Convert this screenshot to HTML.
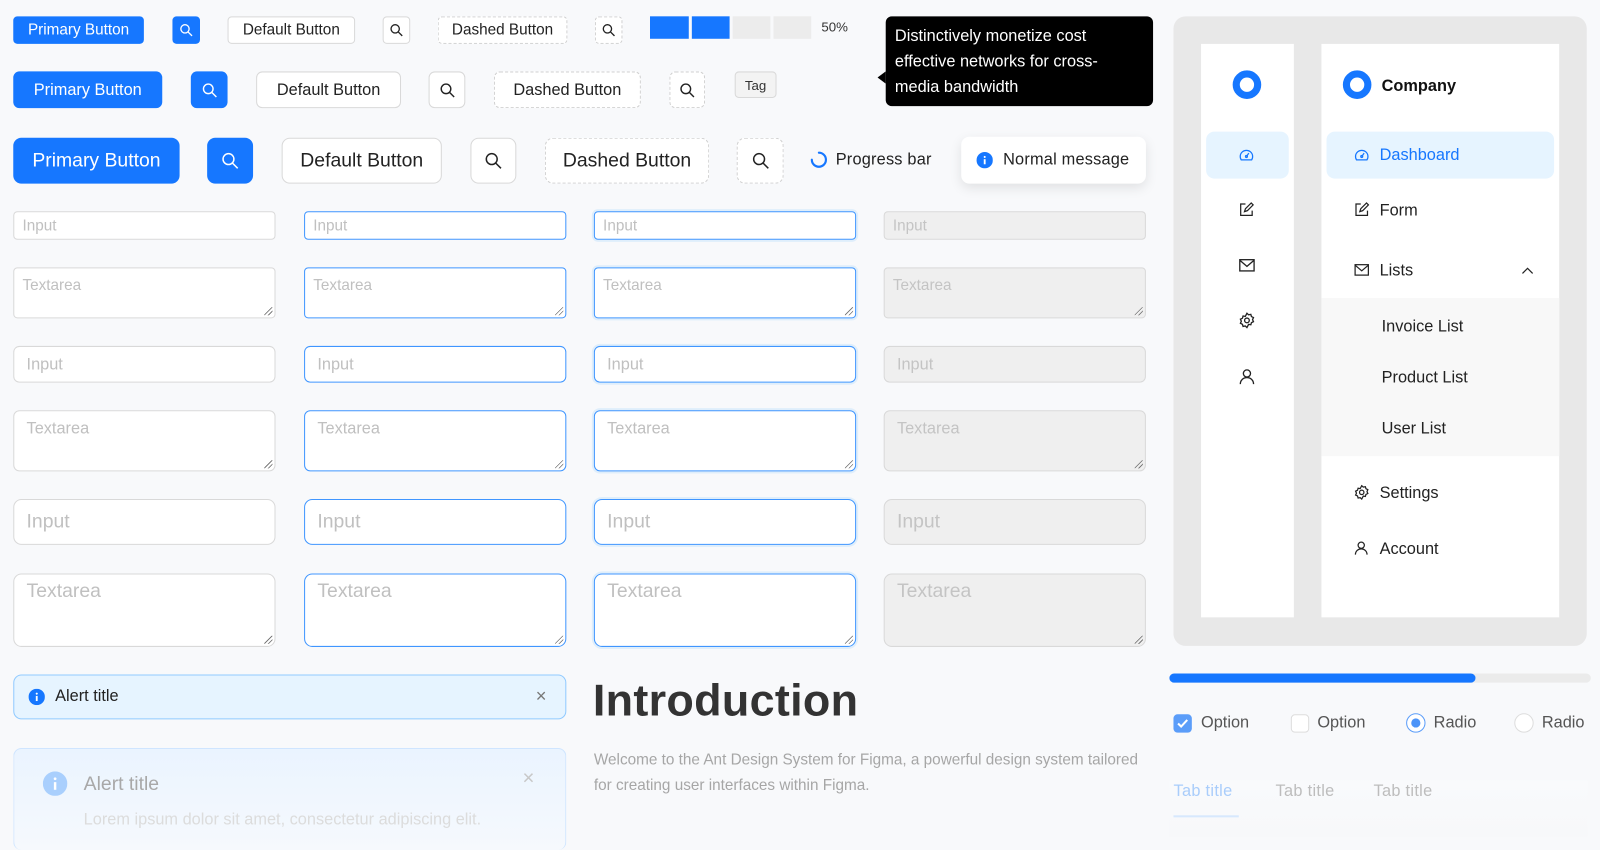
<!DOCTYPE html>
<html><head><meta charset="utf-8"><style>
html,body{margin:0;padding:0;width:1600px;height:840px;overflow:hidden;background:#f8f9fb;}
#w{position:absolute;left:0;top:0;width:1568px;height:823px;transform:scale(1.02041);transform-origin:0 0;font-family:"Liberation Sans",sans-serif;color:#222;}
.a{position:absolute;box-sizing:border-box;}
.b{display:flex;align-items:center;justify-content:center;white-space:nowrap;}
.p{background:#1677ff;color:#fff;}
.d{background:#fff;border:1px solid #d9d9d9;color:#222;}
.ds{background:#fff;border:1px dashed #d0d0d0;color:#222;}
.in{background:#fff;border:1px solid #d9d9d9;color:#c0c0c0;display:flex;align-items:center;padding-left:8px;}
.ta{background:#fff;border:1px solid #d9d9d9;color:#c0c0c0;padding:8px 0 0 8px;}
.f{border-color:#4096ff;}
.g{border-color:#4096ff;box-shadow:0 0 0 2px rgba(5,145,255,.1);}
.x{background:#efefef;border-color:#d9d9d9;color:#c4c4c4;}
.rz::after{content:"";position:absolute;right:2px;bottom:2px;width:8px;height:8px;background:linear-gradient(135deg,transparent 45%,#777 46%,#777 52%,transparent 53%,transparent 70%,#777 71%,#777 77%,transparent 78%);}
.mi{position:absolute;font-size:16px;color:#222;}
svg{display:block}
</style></head><body><div id="w">
<!-- row1 -->
<div class="a b p" style="left:13px;top:16px;width:128px;height:27px;border-radius:4px;font-size:15px">Primary Button</div>
<div class="a b p" style="left:169px;top:16px;width:27px;height:27px;border-radius:4px"><svg width="13" height="13" viewBox="0 0 16 16"><circle cx="6.5" cy="6.5" r="5" fill="none" stroke="#fff" stroke-width="1.6"/><path d="M10.2 10.2L15 15" stroke="#fff" stroke-width="1.6"/></svg></div>
<div class="a b d" style="left:223px;top:16px;width:125px;height:27px;border-radius:4px;font-size:15px">Default Button</div>
<div class="a b d" style="left:375px;top:16px;width:27px;height:27px;border-radius:4px"><svg width="13" height="13" viewBox="0 0 16 16"><circle cx="6.5" cy="6.5" r="5" fill="none" stroke="#222" stroke-width="1.6"/><path d="M10.2 10.2L15 15" stroke="#222" stroke-width="1.6"/></svg></div>
<div class="a b ds" style="left:429px;top:16px;width:127px;height:27px;border-radius:4px;font-size:15px">Dashed Button</div>
<div class="a b ds" style="left:583px;top:16px;width:27px;height:27px;border-radius:4px"><svg width="13" height="13" viewBox="0 0 16 16"><circle cx="6.5" cy="6.5" r="5" fill="none" stroke="#222" stroke-width="1.6"/><path d="M10.2 10.2L15 15" stroke="#222" stroke-width="1.6"/></svg></div>
<div class="a" style="left:637px;top:16px;width:38px;height:22px;background:#1677ff"></div>
<div class="a" style="left:678px;top:16px;width:37px;height:22px;background:#1677ff"></div>
<div class="a" style="left:718px;top:16px;width:37px;height:22px;background:#ececec"></div>
<div class="a" style="left:758px;top:16px;width:37px;height:22px;background:#ececec"></div>
<div class="a" style="left:805px;top:19px;font-size:13px;color:#333">50%</div>
<div class="a" style="left:868px;top:16px;width:262px;height:88px;background:#000;border-radius:6px;color:#fff;font-size:16px;line-height:25px;padding:7px 22px 7px 9px">Distinctively monetize cost effective networks for cross-media bandwidth</div>
<div class="a" style="left:860px;top:70px;width:0;height:0;border-top:6px solid transparent;border-bottom:6px solid transparent;border-right:8px solid #000"></div>
<!-- row2 -->
<div class="a b p" style="left:13px;top:70px;width:146px;height:36px;border-radius:6px;font-size:16px;padding-top:2px">Primary Button</div>
<div class="a b p" style="left:187px;top:70px;width:36px;height:36px;border-radius:6px"><svg width="15" height="15" viewBox="0 0 16 16"><circle cx="6.5" cy="6.5" r="5" fill="none" stroke="#fff" stroke-width="1.5"/><path d="M10.2 10.2L15 15" stroke="#fff" stroke-width="1.5"/></svg></div>
<div class="a b d" style="left:251px;top:70px;width:142px;height:36px;border-radius:6px;font-size:16px;padding-top:2px">Default Button</div>
<div class="a b d" style="left:420px;top:70px;width:36px;height:36px;border-radius:6px"><svg width="15" height="15" viewBox="0 0 16 16"><circle cx="6.5" cy="6.5" r="5" fill="none" stroke="#222" stroke-width="1.5"/><path d="M10.2 10.2L15 15" stroke="#222" stroke-width="1.5"/></svg></div>
<div class="a b ds" style="left:484px;top:70px;width:144px;height:36px;border-radius:6px;font-size:16px;padding-top:2px">Dashed Button</div>
<div class="a b ds" style="left:656px;top:70px;width:35px;height:36px;border-radius:6px"><svg width="15" height="15" viewBox="0 0 16 16"><circle cx="6.5" cy="6.5" r="5" fill="none" stroke="#222" stroke-width="1.5"/><path d="M10.2 10.2L15 15" stroke="#222" stroke-width="1.5"/></svg></div>
<div class="a b" style="left:720px;top:70px;width:41px;height:26px;border-radius:4px;background:#f3f3f3;border:1px solid #d9d9d9;font-size:13px;color:#333">Tag</div>
<!-- row3 -->
<div class="a b p" style="left:13px;top:135px;width:163px;height:45px;border-radius:8px;font-size:19px">Primary Button</div>
<div class="a b p" style="left:203px;top:135px;width:45px;height:45px;border-radius:8px"><svg width="17" height="17" viewBox="0 0 16 16"><circle cx="6.5" cy="6.5" r="5" fill="none" stroke="#fff" stroke-width="1.4"/><path d="M10.2 10.2L15 15" stroke="#fff" stroke-width="1.4"/></svg></div>
<div class="a b d" style="left:276px;top:135px;width:157px;height:45px;border-radius:8px;font-size:19px">Default Button</div>
<div class="a b d" style="left:461px;top:135px;width:45px;height:45px;border-radius:8px"><svg width="17" height="17" viewBox="0 0 16 16"><circle cx="6.5" cy="6.5" r="5" fill="none" stroke="#222" stroke-width="1.4"/><path d="M10.2 10.2L15 15" stroke="#222" stroke-width="1.4"/></svg></div>
<div class="a b ds" style="left:534px;top:135px;width:161px;height:45px;border-radius:8px;font-size:19px">Dashed Button</div>
<div class="a b ds" style="left:722px;top:135px;width:46px;height:45px;border-radius:8px"><svg width="17" height="17" viewBox="0 0 16 16"><circle cx="6.5" cy="6.5" r="5" fill="none" stroke="#222" stroke-width="1.4"/><path d="M10.2 10.2L15 15" stroke="#222" stroke-width="1.4"/></svg></div>
<svg class="a" style="left:794px;top:148px" width="17" height="17" viewBox="0 0 16 16"><path d="M8 1.5A6.5 6.5 0 1 1 1.5 8" fill="none" stroke="#1677ff" stroke-width="2" stroke-linecap="round"/></svg>
<div class="a" style="left:819px;top:148px;font-size:16px;color:#222;letter-spacing:0.2px">Progress bar</div>
<div class="a" style="left:942px;top:134px;width:181px;height:46px;background:#fff;border-radius:8px;box-shadow:0 4px 12px rgba(0,0,0,.1)"></div>
<svg class="a" style="left:957px;top:149px" width="16" height="16" viewBox="0 0 16 16"><circle cx="8" cy="8" r="8" fill="#1677ff"/><rect x="7.1" y="7" width="1.8" height="5" fill="#fff"/><circle cx="8" cy="4.8" r="1" fill="#fff"/></svg>
<div class="a" style="left:983px;top:148px;font-size:16px;color:#222;letter-spacing:0.2px">Normal message</div>
<!-- inputs -->
<div class="a in" style="left:13px;top:207px;width:257px;height:28px;border-radius:4px;font-size:15px">Input</div>
<div class="a in f" style="left:298px;top:207px;width:257px;height:28px;border-radius:4px;font-size:15px">Input</div>
<div class="a in g" style="left:582px;top:207px;width:257px;height:28px;border-radius:4px;font-size:15px">Input</div>
<div class="a in x" style="left:866px;top:207px;width:257px;height:28px;border-radius:4px;font-size:15px">Input</div>
<div class="a ta rz" style="left:13px;top:262px;width:257px;height:50px;border-radius:4px;font-size:15px;padding-top:8px">Textarea</div>
<div class="a ta rz f" style="left:298px;top:262px;width:257px;height:50px;border-radius:4px;font-size:15px;padding-top:8px">Textarea</div>
<div class="a ta rz g" style="left:582px;top:262px;width:257px;height:50px;border-radius:4px;font-size:15px;padding-top:8px">Textarea</div>
<div class="a ta rz x" style="left:866px;top:262px;width:257px;height:50px;border-radius:4px;font-size:15px;padding-top:8px">Textarea</div>
<div class="a in" style="left:13px;top:339px;width:257px;height:36px;border-radius:6px;font-size:16px;padding-left:12px;padding-top:2px">Input</div>
<div class="a in f" style="left:298px;top:339px;width:257px;height:36px;border-radius:6px;font-size:16px;padding-left:12px;padding-top:2px">Input</div>
<div class="a in g" style="left:582px;top:339px;width:257px;height:36px;border-radius:6px;font-size:16px;padding-left:12px;padding-top:2px">Input</div>
<div class="a in x" style="left:866px;top:339px;width:257px;height:36px;border-radius:6px;font-size:16px;padding-left:12px;padding-top:2px">Input</div>
<div class="a ta rz" style="left:13px;top:402px;width:257px;height:60px;border-radius:6px;font-size:16px;padding:9px 12px">Textarea</div>
<div class="a ta rz f" style="left:298px;top:402px;width:257px;height:60px;border-radius:6px;font-size:16px;padding:9px 12px">Textarea</div>
<div class="a ta rz g" style="left:582px;top:402px;width:257px;height:60px;border-radius:6px;font-size:16px;padding:9px 12px">Textarea</div>
<div class="a ta rz x" style="left:866px;top:402px;width:257px;height:60px;border-radius:6px;font-size:16px;padding:9px 12px">Textarea</div>
<div class="a in" style="left:13px;top:489px;width:257px;height:45px;border-radius:8px;font-size:19px;padding-left:12px">Input</div>
<div class="a in f" style="left:298px;top:489px;width:257px;height:45px;border-radius:8px;font-size:19px;padding-left:12px">Input</div>
<div class="a in g" style="left:582px;top:489px;width:257px;height:45px;border-radius:8px;font-size:19px;padding-left:12px">Input</div>
<div class="a in x" style="left:866px;top:489px;width:257px;height:45px;border-radius:8px;font-size:19px;padding-left:12px">Input</div>
<div class="a ta rz" style="left:13px;top:562px;width:257px;height:72px;border-radius:8px;font-size:19px;padding:6px 12px">Textarea</div>
<div class="a ta rz f" style="left:298px;top:562px;width:257px;height:72px;border-radius:8px;font-size:19px;padding:6px 12px">Textarea</div>
<div class="a ta rz g" style="left:582px;top:562px;width:257px;height:72px;border-radius:8px;font-size:19px;padding:6px 12px">Textarea</div>
<div class="a ta rz x" style="left:866px;top:562px;width:257px;height:72px;border-radius:8px;font-size:19px;padding:6px 12px">Textarea</div>
<!-- alerts -->
<div class="a" style="left:13px;top:661px;width:542px;height:44px;border-radius:8px;background:#e6f4ff;border:1px solid #91caff"></div>
<svg class="a" style="left:28px;top:675px" width="16" height="16" viewBox="0 0 16 16"><circle cx="8" cy="8" r="8" fill="#1677ff"/><rect x="7.1" y="7" width="1.8" height="5" fill="#fff"/><circle cx="8" cy="4.8" r="1" fill="#fff"/></svg>
<div class="a" style="left:54px;top:674px;font-size:16px;color:#222">Alert title</div>
<div class="a" style="left:525px;top:672px;font-size:18px;color:#777">×</div>
<div class="a" style="left:13px;top:733px;width:542px;height:100px;border-radius:8px;background:linear-gradient(#eaf4ff,#f6f9fd);border:1px solid #cfe5ff;border-bottom:none"></div>
<svg class="a" style="left:42px;top:756px" width="24" height="24" viewBox="0 0 16 16"><circle cx="8" cy="8" r="8" fill="#a9cffd"/><rect x="7.2" y="7" width="1.6" height="5" fill="#fff"/><circle cx="8" cy="4.8" r=".9" fill="#fff"/></svg>
<div class="a" style="left:82px;top:758px;font-size:19px;color:#a8a8a8">Alert title</div>
<div class="a" style="left:512px;top:752px;font-size:20px;color:#c8c8c8">×</div>
<div class="a" style="left:82px;top:795px;font-size:16px;color:#dcdcdc">Lorem ipsum dolor sit amet, consectetur adipiscing elit.</div>
<!-- intro -->
<div class="a" style="left:581px;top:662px;font-size:44px;font-weight:bold;color:#333;letter-spacing:0.3px">Introduction</div>
<div class="a" style="left:582px;top:732px;width:540px;font-size:15px;line-height:25px;color:#a6a6a6">Welcome to the Ant Design System for Figma, a powerful design system tailored for creating user interfaces within Figma.</div>
<!-- menu panel -->
<div class="a" style="left:1150px;top:16px;width:405px;height:617px;background:#e8e8e8;border-radius:12px"></div>
<div class="a" style="left:1177px;top:43px;width:91px;height:562px;background:#fff"></div>
<div class="a" style="left:1295px;top:43px;width:233px;height:562px;background:#fff"></div>
<div class="a" style="left:1208px;top:69px;width:28px;height:28px;border-radius:50%;border:7px solid #1677ff"></div>
<div class="a" style="left:1316px;top:69px;width:28px;height:28px;border-radius:50%;border:7px solid #1677ff"></div>
<div class="a" style="left:1354px;top:76px;font-size:16px;font-weight:bold;color:#111">Company</div>
<div class="a" style="left:1182px;top:129px;width:81px;height:46px;background:#e6f4ff;border-radius:8px"></div>
<div class="a" style="left:1300px;top:129px;width:223px;height:46px;background:#e6f4ff;border-radius:8px"></div>
<div class="a" style="left:1295px;top:292px;width:233px;height:155px;background:#f8f8f8"></div>
<!-- icons left -->
<svg class="a" style="left:1214px;top:144px" width="15" height="15" viewBox="0 0 16 16" fill="none" stroke="#1677ff" stroke-width="1.3"><path d="M2.5 13.5A6.5 6.5 0 1 1 13.5 13.5Z"/><path d="M8 10L10.5 6.5"/><circle cx="8" cy="10" r="1"/></svg>
<svg class="a" style="left:1214px;top:198px" width="15" height="15" viewBox="0 0 16 16" fill="none" stroke="#222" stroke-width="1.3"><path d="M7 2H2v12h12V9"/><path d="M6 10l1-3 6-6 2 2-6 6z"/></svg>
<svg class="a" style="left:1214px;top:253px" width="16" height="14" viewBox="0 0 16 14" fill="none" stroke="#222" stroke-width="1.3"><rect x="1" y="1.5" width="14" height="11"/><path d="M1 2l7 6 7-6"/></svg>
<svg class="a" style="left:1214px;top:306px" width="16" height="16" viewBox="0 0 16 16" fill="none" stroke="#222" stroke-width="1.3"><path d="M8 1l1.6 1.5 2.2-.4.6 2.1 2 1-.9 2 .9 2-2 1-.6 2.1-2.2-.4L8 15l-1.6-1.5-2.2.4-.6-2.1-2-1 .9-2-.9-2 2-1 .6-2.1 2.2.4z"/><circle cx="8" cy="8" r="2.3"/></svg>
<svg class="a" style="left:1214px;top:361px" width="16" height="16" viewBox="0 0 16 16" fill="none" stroke="#222" stroke-width="1.3"><circle cx="8" cy="5" r="3.5"/><path d="M1.5 15.5c0-4 3-6.5 6.5-6.5s6.5 2.5 6.5 6.5"/></svg>
<!-- right items -->
<svg class="a" style="left:1327px;top:144px" width="15" height="15" viewBox="0 0 16 16" fill="none" stroke="#1677ff" stroke-width="1.3"><path d="M2.5 13.5A6.5 6.5 0 1 1 13.5 13.5Z"/><path d="M8 10L10.5 6.5"/><circle cx="8" cy="10" r="1"/></svg>
<div class="mi" style="left:1352px;top:144px;color:#1677ff">Dashboard</div>
<svg class="a" style="left:1327px;top:198px" width="15" height="15" viewBox="0 0 16 16" fill="none" stroke="#222" stroke-width="1.3"><path d="M7 2H2v12h12V9"/><path d="M6 10l1-3 6-6 2 2-6 6z"/></svg>
<div class="mi" style="left:1352px;top:198px">Form</div>
<svg class="a" style="left:1327px;top:258px" width="15" height="13" viewBox="0 0 16 14" fill="none" stroke="#222" stroke-width="1.3"><rect x="1" y="1.5" width="14" height="11"/><path d="M1 2l7 6 7-6"/></svg>
<div class="mi" style="left:1352px;top:257px">Lists</div>
<svg class="a" style="left:1491px;top:261px" width="12" height="8" viewBox="0 0 12 8" fill="none" stroke="#222" stroke-width="1.2"><path d="M1 7l5-5 5 5"/></svg>
<div class="mi" style="left:1354px;top:312px">Invoice List</div>
<div class="mi" style="left:1354px;top:362px">Product List</div>
<div class="mi" style="left:1354px;top:412px">User List</div>
<svg class="a" style="left:1327px;top:475px" width="15" height="15" viewBox="0 0 16 16" fill="none" stroke="#222" stroke-width="1.3"><path d="M8 1l1.6 1.5 2.2-.4.6 2.1 2 1-.9 2 .9 2-2 1-.6 2.1-2.2-.4L8 15l-1.6-1.5-2.2.4-.6-2.1-2-1 .9-2-.9-2 2-1 .6-2.1 2.2.4z"/><circle cx="8" cy="8" r="2.3"/></svg>
<div class="mi" style="left:1352px;top:475px">Settings</div>
<svg class="a" style="left:1327px;top:530px" width="14" height="14" viewBox="0 0 16 16" fill="none" stroke="#222" stroke-width="1.4"><circle cx="8" cy="5" r="3.5"/><path d="M1.5 15.5c0-4 3-6.5 6.5-6.5s6.5 2.5 6.5 6.5"/></svg>
<div class="mi" style="left:1352px;top:530px">Account</div>
<!-- progress -->
<div class="a" style="left:1146px;top:660px;width:413px;height:9px;background:#ebebeb;border-radius:5px"></div>
<div class="a" style="left:1146px;top:660px;width:300px;height:9px;background:#1677ff;border-radius:5px"></div>
<!-- checkbox/radio -->
<div class="a b" style="left:1150px;top:700px;width:18px;height:18px;background:#5b9df9;border-radius:4px"><svg width="12" height="10" viewBox="0 0 12 10"><path d="M1.5 5l3 3 6-6.5" fill="none" stroke="#fff" stroke-width="2"/></svg></div>
<div class="a" style="left:1177px;top:700px;font-size:16px;color:#555">Option</div>
<div class="a" style="left:1265px;top:700px;width:18px;height:18px;background:#fff;border:1px solid #ddd;border-radius:4px"></div>
<div class="a" style="left:1291px;top:700px;font-size:16px;color:#555">Option</div>
<div class="a" style="left:1378px;top:699px;width:19px;height:19px;border-radius:50%;border:1px solid #5b9df9;background:#fff"></div>
<div class="a" style="left:1383px;top:704px;width:9px;height:9px;border-radius:50%;background:#4d94f8"></div>
<div class="a" style="left:1405px;top:700px;font-size:16px;color:#555">Radio</div>
<div class="a" style="left:1484px;top:699px;width:19px;height:19px;border-radius:50%;border:1px solid #ddd;background:#fff"></div>
<div class="a" style="left:1511px;top:700px;font-size:16px;color:#555">Radio</div>
<!-- tabs -->
<div class="a" style="left:1146px;top:765px;width:410px;height:55px;background:linear-gradient(#f9fafc,#f7f8fa)"></div>
<div class="a" style="left:1150px;top:767px;font-size:16px;color:#a9cdfb;letter-spacing:0.3px">Tab title</div>
<div class="a" style="left:1250px;top:767px;font-size:16px;color:#bdbdbd;letter-spacing:0.3px">Tab title</div>
<div class="a" style="left:1346px;top:767px;font-size:16px;color:#bdbdbd;letter-spacing:0.3px">Tab title</div>
<div class="a" style="left:1150px;top:799px;width:64px;height:2px;background:#d7e8fd"></div>
</div></body></html>
